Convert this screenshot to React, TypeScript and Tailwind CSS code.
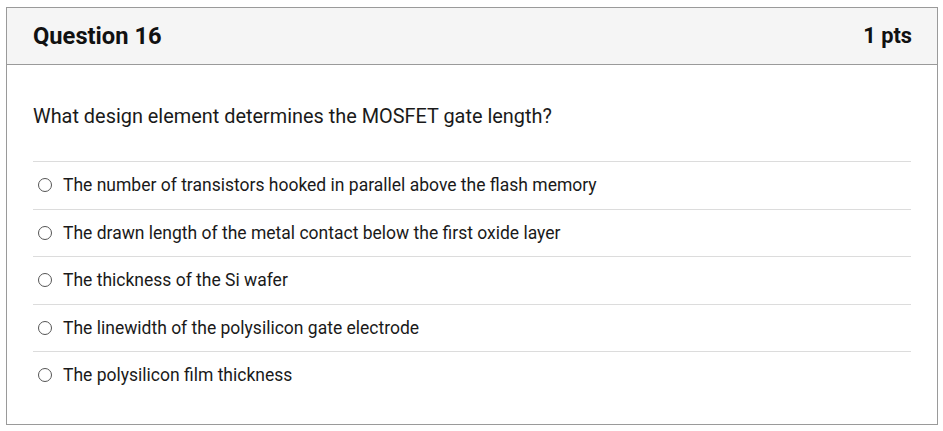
const options = [
  'The number of transistors hooked in parallel above the flash memory',
  'The drawn length of the metal contact below the first oxide layer',
  'The thickness of the Si wafer',
  'The linewidth of the polysilicon gate electrode',
  'The polysilicon film thickness',
];

export default function App() {
  return (
    <div className="w-[943px] h-[431px] bg-white pl-[6px] pt-[7px] font-['Roboto',sans-serif]">
      <div className="w-[932px] h-[418px] border border-[#9a9a9a] flex flex-col">
        <div className="h-[57px] bg-[#f5f5f5] border-b border-[#9a9a9a] flex items-center justify-between pl-[26px] pr-[25px] pt-[1px]">
          <h2 className="text-[23.7px] font-bold text-[#111]">Question 16</h2>
          <span className="text-[21.8px] font-bold text-[#111]">1 pts</span>
        </div>
        <div className="px-[26px] pt-[37px]">
          <p className="text-[19.9px] text-[#1a1a1a] leading-[30px]">
            What design element determines the MOSFET gate length?
          </p>
          <div className="mt-[29px]">
            {options.map((opt) => (
              <label
                key={opt}
                className="flex items-center gap-[11px] h-[47.5px] border-t border-[#dcdcdc] pl-[5px]"
              >
                <span className="w-[14px] h-[14px] rounded-full border border-[#555] bg-white shrink-0" />
                <span className="text-[17.5px] text-[#1a1a1a]">{opt}</span>
              </label>
            ))}
          </div>
        </div>
      </div>
    </div>
  );
}
